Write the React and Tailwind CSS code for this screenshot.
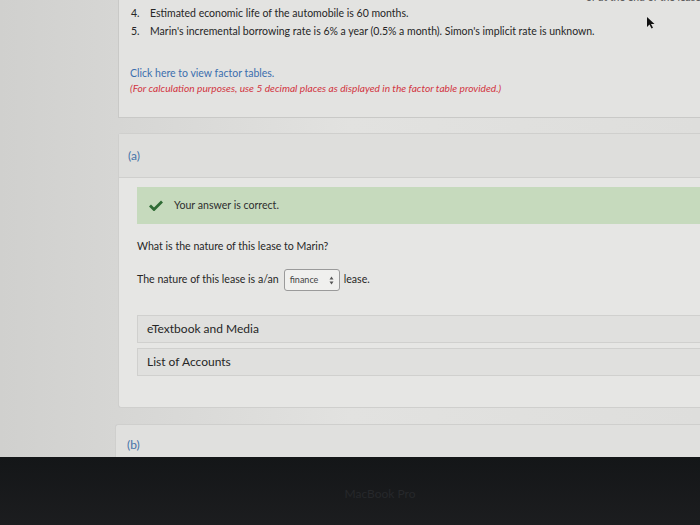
import React from "react";

function Cursor() {
  return (
    <svg className="absolute left-[646px] top-[16px]" width="9" height="13" viewBox="0 0 9 13">
      <path d="M1 1 L1 11 L3.5 8.5 L5.5 12.5 L7 11.8 L5 8 L8.5 8 Z" fill="#111" />
    </svg>
  );
}

export default function App() {
  return (
    <div className="relative w-[700px] h-[525px] overflow-hidden flex flex-col font-['Lato',sans-serif]">
      <div className="h-[457px] bg-linear-to-r from-[#d0d0ce] via-[#e2e2e0] to-[#dededc] pl-[118px] flex flex-col">
        {/* question statement box */}
        <div className="h-[118px] border-l border-b border-[#c9c9c7] bg-[#e3e3e1] flex flex-col pl-[12px] text-[10.5px] text-[#262626] overflow-hidden">
          <div className="mt-[-9px] h-[12px] pl-[455px] whitespace-nowrap leading-[12px] text-[#555]">or at the end of the lease term.</div>
          <div className="flex gap-[7px] leading-[18px] mt-[1px]">
            <span className="w-[12px]">4.</span>
            <span>Estimated economic life of the automobile is 60 months.</span>
          </div>
          <div className="flex gap-[7px] leading-[18px]">
            <span className="w-[12px]">5.</span>
            <span>Marin's incremental borrowing rate is 6% a year (0.5% a month). Simon's implicit rate is unknown.</span>
          </div>
          <div className="mt-[26px] -ml-[1px] text-[#3c6fae] leading-[15px]">Click here to view factor tables.</div>
          <div className="-ml-[1px] text-[#d2343f] italic text-[10.2px] leading-[15px]">(For calculation purposes, use 5 decimal places as displayed in the factor table provided.)</div>
        </div>

        {/* part (a) */}
        <div className="mt-[15px] h-[275px] border border-r-0 border-[#cfcfcd] rounded-l-[3px] bg-[#e6e6e4] flex flex-col">
          <div className="h-[44px] border-b border-[#cfcfcd] bg-[#dededc] flex items-center pl-[9px] text-[12px] text-[#4573a8]">(a)</div>
          <div className="flex flex-col pl-[18px] pt-[9px]">
            <div className="h-[37px] bg-[#c6dabd] flex items-center pl-[12px] gap-[11px] text-[10.6px] text-[#2e2e2e]">
              <svg width="14" height="11" viewBox="0 0 14 11"><path d="M1 5.5 L5 9.5 L13 1.5" stroke="#2f6b35" strokeWidth="2.8" fill="none" /></svg>
              <span>Your answer is correct.</span>
            </div>
            <div className="mt-[15px] text-[10.6px] text-[#262626] leading-[14px]">What is the nature of this lease to Marin?</div>
            <div className="mt-[16px] flex items-center gap-[4px] text-[10.6px] text-[#262626]">
              <span className="mr-[1px]">The nature of this lease is a/an</span>
              <div className="w-[56px] h-[22px] border border-[#9a9a9a] rounded-[3px] bg-[#f0f0ee] flex items-center justify-between px-[5px]">
                <span className="text-[9px] text-[#444]">finance</span>
                <svg width="5" height="9" viewBox="0 0 5 9"><path d="M0.5 3.5 L2.5 0.5 L4.5 3.5 Z M0.5 5.5 L2.5 8.5 L4.5 5.5 Z" fill="#555" /></svg>
              </div>
              <span>lease.</span>
            </div>
            <div className="mt-[24px] h-[28px] border border-r-0 border-[#d0d0ce] bg-[#e0e0de] flex items-center pl-[9px] text-[12px] text-[#262626]">eTextbook and Media</div>
            <div className="mt-[5px] h-[28px] border border-r-0 border-[#d0d0ce] bg-[#e0e0de] flex items-center pl-[9px] text-[12px] text-[#262626]">List of Accounts</div>
          </div>
        </div>

        {/* part (b) */}
        <div className="mt-[16px] flex-1 -ml-[3px] border border-r-0 border-b-0 border-[#cfcfcd] rounded-tl-[3px] bg-[#e0e0de] flex items-end pl-[11px] pb-[3px] text-[12px] text-[#4573a8]">(b)</div>
      </div>
      <div className="flex-1 bg-linear-to-b from-[#141618] to-[#1c1d1f] flex justify-center pt-[28px]">
        <span className="text-[12px] text-[#26282b] ml-[60px]">MacBook Pro</span>
      </div>
      <Cursor />
    </div>
  );
}
